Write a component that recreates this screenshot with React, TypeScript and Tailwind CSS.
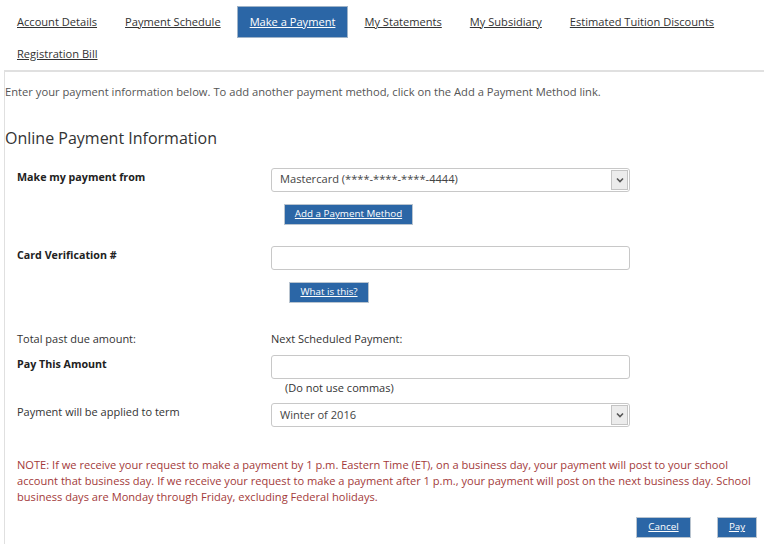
import React from 'react'

const tabs = [
  'Account Details',
  'Payment Schedule',
  'Make a Payment',
  'My Statements',
  'My Subsidiary',
  'Estimated Tuition Discounts',
  'Registration Bill',
]

function Select({ value }: { value: string }) {
  return (
    <div className="w-[359px] h-[24px] border border-[#c8c8c8] rounded-[3px] flex items-center bg-white">
      <span className="flex-1 pl-[8px] text-[11.1px] text-[#444]">{value}</span>
      <span className="w-[17px] h-[20px] mr-[1px] bg-[#ececec] border border-[#c4c4c4] flex items-center justify-center">
        <svg width="8" height="6" viewBox="0 0 8 6">
          <path d="M1 1.5 L4 4.5 L7 1.5" fill="none" stroke="#555" strokeWidth="1.6" />
        </svg>
      </span>
    </div>
  )
}

function Input() {
  return <div className="w-[359px] h-[24px] border border-[#c8c8c8] rounded-[3px] bg-white" />
}

function BlueButton({ label, className }: { label: string; className?: string }) {
  return (
    <span className={`inline-flex items-center justify-center h-[21px] bg-[#2b66a6] border border-[#b9c4cf] text-white text-[9.8px] underline ${className ?? ''}`}>
      {label}
    </span>
  )
}

export default function App() {
  return (
    <div className="w-[764px] h-[544px] bg-white overflow-hidden text-[#333]" style={{ fontFamily: '"Open Sans", "Liberation Sans", sans-serif' }}>
      {/* ── tabs ── */}
      <div className="flex flex-wrap pl-[5px] pt-[6px] h-[70px] content-start">
        {tabs.map((t) => (
          <div
            key={t}
            className={`h-[32px] flex items-center px-[12px] mr-[4px] text-[11.1px] underline ${
              t === 'Make a Payment' ? 'bg-[#2b66a6] text-white border border-[#9fb3c8]' : 'text-[#333]'
            }`}
          >
            {t}
          </div>
        ))}
      </div>

      {/* ── content panel ── */}
      <div className="ml-[4px] border-t-[2px] border-l border-[#e0e0e0] h-[480px]">
        <p className="pt-[12px] text-[11.2px] text-[#555]">
          Enter your payment information below. To add another payment method, click on the Add a Payment Method link.
        </p>
        <h2 className="mt-[25px] text-[16px] text-[#333] leading-[24px]">Online Payment Information</h2>

        <div className="pl-[12px] mt-[18px]">
          <div className="flex">
            <div className="w-[254px] pt-[1px] text-[10.7px] font-bold text-[#222]">Make my payment from</div>
            <div>
              <Select value="Mastercard (****-****-****-4444)" />
              <BlueButton label="Add a Payment Method" className="mt-[12px] ml-[13px] w-[129px]" />
            </div>
          </div>

          <div className="flex mt-[21px]">
            <div className="w-[254px] pt-[1px] text-[10.7px] font-bold text-[#222]">Card Verification #</div>
            <div>
              <Input />
              <BlueButton label="What is this?" className="mt-[12px] ml-[18px] w-[80px]" />
            </div>
          </div>

          <div className="flex mt-[28px] text-[11px] text-[#333]">
            <div className="w-[254px]">Total past due amount:</div>
            <div>Next Scheduled Payment:</div>
          </div>

          <div className="flex mt-[8px]">
            <div className="w-[254px] pt-[1px] text-[10.7px] font-bold text-[#222]">Pay This Amount</div>
            <div>
              <Input />
              <div className="pl-[14px] text-[11px] text-[#333] leading-[17px]">(Do not use commas)</div>
            </div>
          </div>

          <div className="flex mt-[7px]">
            <div className="w-[254px] pt-[1px] text-[11px] text-[#333]">Payment will be applied to term</div>
            <Select value="Winter of 2016" />
          </div>

          <p className="mt-[30px] pr-[4px] text-[11.1px] leading-[16px] text-[#a33a3a]">
            NOTE: If we receive your request to make a payment by 1 p.m. Eastern Time (ET), on a business day, your payment will post to your school account that business day. If we receive your request to make a payment after 1 p.m., your payment will post on the next business day. School business days are Monday through Friday, excluding Federal holidays.
          </p>

          <div className="flex justify-end mt-[12px] pr-[7px] gap-[26px]">
            <BlueButton label="Cancel" className="w-[55px]" />
            <BlueButton label="Pay" className="w-[40px]" />
          </div>
        </div>
      </div>
    </div>
  )
}
